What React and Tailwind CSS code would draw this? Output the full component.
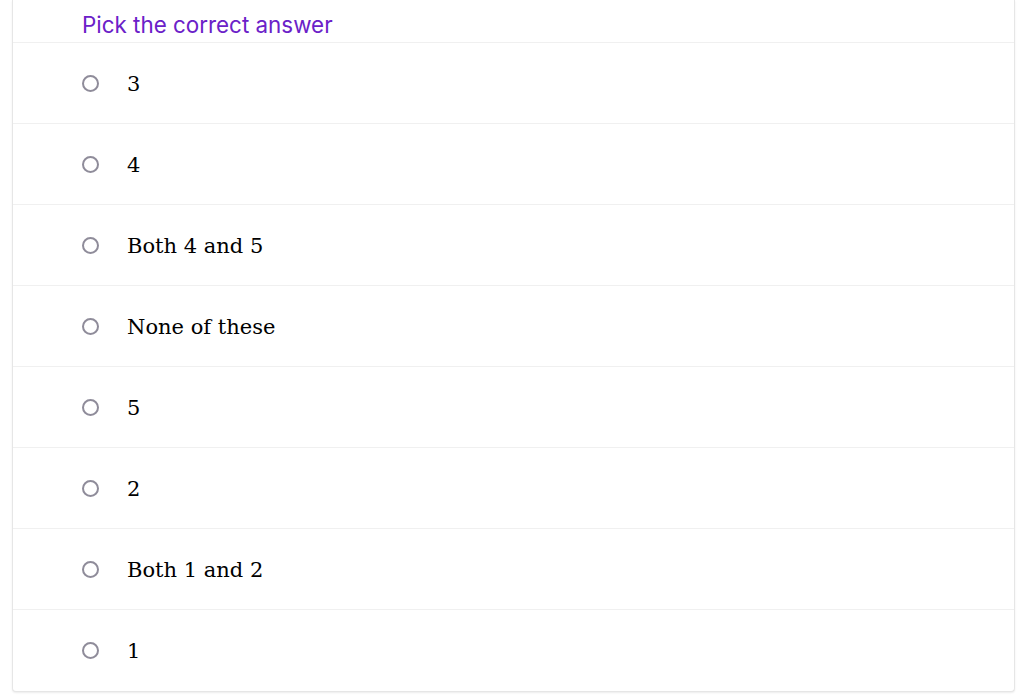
import React from 'react';

const options = ['3', '4', 'Both 4 and 5', 'None of these', '5', '2', 'Both 1 and 2', '1'];

export default function App() {
  return (
    <div className="w-[1024px] h-[700px] bg-white">
      <div className="ml-[12px] w-[1003px] bg-white border-x border-b border-[#e6e6e6] rounded-b shadow-[0_1px_2px_rgba(0,0,0,0.08)]">
        {/* Question header */}
        <div className="h-[43px] pl-[69px] pt-[9px] border-b border-[#f0f0f0]">
          <h2 className="text-[22.4px] leading-[32px] text-[#6b21c8] font-['Inter',sans-serif]">
            Pick the correct answer
          </h2>
        </div>

        {/* Options */}
        {options.map((opt, i) => (
          <div
            key={i}
            className={`h-[81px] flex items-center pl-[69px] ${i < options.length - 1 ? 'border-b border-[#f0f0f0]' : ''}`}
          >
            <span className="w-[17px] h-[17px] rounded-full border-[2.5px] border-[#8f8c9a] shrink-0" />
            <span className="ml-[28px] pt-[3px] text-[21px] text-black font-['DejaVu_Serif',serif]">{opt}</span>
          </div>
        ))}
      </div>
    </div>
  );
}
